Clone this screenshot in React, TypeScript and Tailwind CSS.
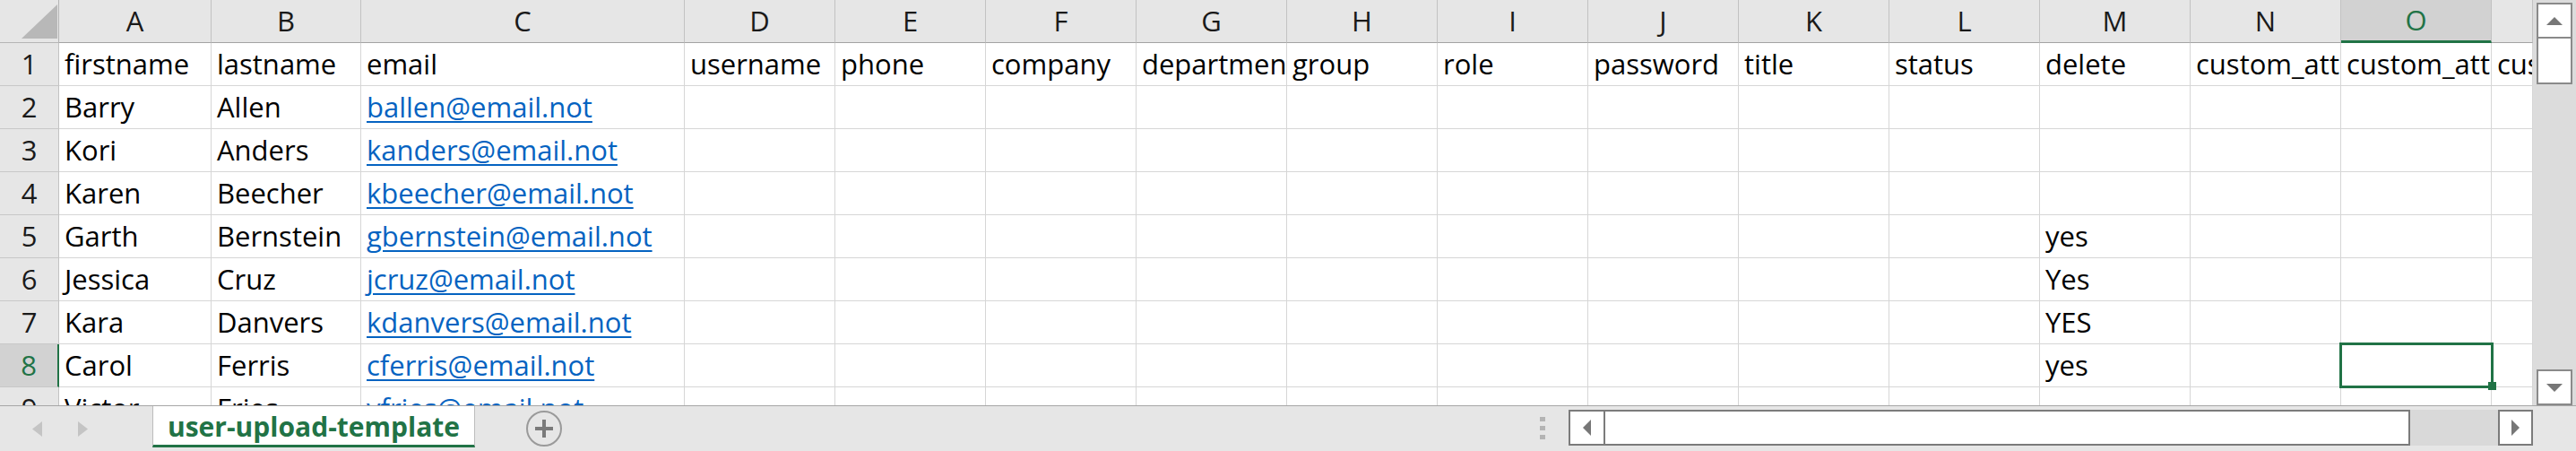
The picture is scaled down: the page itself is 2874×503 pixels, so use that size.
import { Fragment } from "react";

const cols = ["A", "B", "C", "D", "E", "F", "G", "H", "I", "J", "K", "L", "M", "N", "O", "P"];

function row(first: string, last: string, email: string, del = ""): string[] {
  return [first, last, email, "", "", "", "", "", "", "", "", "", del, "", "", ""];
}

const rows: string[][] = [
  [
    "firstname",
    "lastname",
    "email",
    "username",
    "phone",
    "company",
    "department",
    "group",
    "role",
    "password",
    "title",
    "status",
    "delete",
    "custom_attr1",
    "custom_attr2",
    "custom_attr3",
  ],
  row("Barry", "Allen", "ballen@email.not"),
  row("Kori", "Anders", "kanders@email.not"),
  row("Karen", "Beecher", "kbeecher@email.not"),
  row("Garth", "Bernstein", "gbernstein@email.not", "yes"),
  row("Jessica", "Cruz", "jcruz@email.not", "Yes"),
  row("Kara", "Danvers", "kdanvers@email.not", "YES"),
  row("Carol", "Ferris", "cferris@email.not", "yes"),
  row("Victor", "Fries", "vfries@email.not"),
];

function Triangle({ dir, color, w, h }: { dir: "up" | "down" | "left" | "right"; color: string; w: number; h: number }) {
  const pts =
    dir === "up"
      ? `0,${h} ${w / 2},0 ${w},${h}`
      : dir === "down"
        ? `0,0 ${w},0 ${w / 2},${h}`
        : dir === "left"
          ? `${w},0 ${w},${h} 0,${h / 2}`
          : `0,0 0,${h} ${w},${h / 2}`;
  return (
    <svg width={w} height={h} viewBox={`0 0 ${w} ${h}`} className="block">
      <polygon points={pts} fill={color} />
    </svg>
  );
}

function Sheet() {
  return (
    <div className="grid h-[452px] w-[2826px] shrink-0 auto-rows-[48px] grid-cols-[66px_170px_167px_361px_repeat(12,168px)_46px] overflow-hidden">
      <div className="relative border-r border-b border-[#b5b5b5] bg-[#e6e6e6]">
        <svg width="66" height="48" className="absolute left-0 top-0">
          <polygon points="64,5 64,43 24,43" fill="#b8b8b8" />
        </svg>
      </div>
      {cols.map((c) =>
        c === "O" ? (
          <div
            key={c}
            className="border-r border-b-[3px] border-r-[#c2c2c2] border-b-[#217346] bg-[#d2d2d2] text-center leading-[45px] text-[#217346]"
          >
            {c}
          </div>
        ) : (
          <div
            key={c}
            className="border-r border-b border-r-[#c2c2c2] border-b-[#a3a3a3] bg-[#e6e6e6] text-center leading-[47px] text-[#1a1a1a]"
          >
            {/* P is only partly in view, its letter sits past the edge */}
            {c === "P" ? "" : c}
          </div>
        ),
      )}
      {rows.map((r, i) => (
        <Fragment key={i}>
          {i === 7 ? (
            <div className="border-r-2 border-b border-r-[#217346] border-b-[#c8c8c8] bg-[#d2d2d2] text-center leading-[47px] text-[#217346]">
              {i + 1}
            </div>
          ) : (
            <div className="border-r border-b border-r-[#c2c2c2] border-b-[#c8c8c8] bg-[#e6e6e6] text-center leading-[47px] text-[#1a1a1a]">
              {i + 1}
            </div>
          )}
          {r.map((v, j) => (
            <div
              key={j}
              className="relative overflow-visible whitespace-nowrap border-r border-b border-[#d6d6d6] bg-white leading-[47px]"
            >
              <div className="overflow-hidden pl-[6px]">
                {j === 2 && i > 0 ? (
                  <span className="text-[#0563c1] underline decoration-2 underline-offset-[4px]">{v}</span>
                ) : (
                  <span className="text-black">{v}</span>
                )}
              </div>
              {i === 7 && j === 14 ? (
                <div className="absolute -left-[2px] -top-[2px] z-10 h-[51px] w-[172px] border-[3px] border-[#217346]">
                  <div className="absolute -right-[6px] -bottom-[5px] h-[9px] w-[9px] bg-[#217346]" />
                </div>
              ) : null}
            </div>
          ))}
        </Fragment>
      ))}
    </div>
  );
}

function VerticalScroll() {
  return (
    <div className="flex h-[452px] w-[48px] flex-col bg-[#dcdcdc] pl-[4px] pr-[4px]">
      <div className="mt-[3px] flex h-[40px] items-center justify-center border-2 border-[#8a8a8a] bg-white">
        <Triangle dir="up" color="#777777" w={18} h={9} />
      </div>
      <div className="h-[51px] border-2 border-t-0 border-[#8a8a8a] bg-white" />
      <div className="mt-auto flex h-[40px] items-center justify-center border-2 border-[#8a8a8a] bg-white">
        <Triangle dir="down" color="#777777" w={18} h={9} />
      </div>
    </div>
  );
}

function BottomBar() {
  return (
    <div className="flex h-[51px] border-t border-[#a6a6a6] bg-[#e6e6e6]">
      <div className="flex w-[170px] items-center pl-[36px]">
        <Triangle dir="left" color="#c4c4c4" w={11} h={17} />
        <div className="ml-[40px]">
          <Triangle dir="right" color="#c4c4c4" w={11} h={17} />
        </div>
      </div>
      <div className="h-[46px] w-[360px] border-x border-b-[3px] border-x-[#bdbdbd] border-b-[#217346] bg-white pt-[2px] text-center text-[30px] font-bold leading-[41px] text-[#217346]">
        user-upload-template
      </div>
      <div className="w-[97px] pl-[57px] pt-[5px]">
        <svg width="40" height="40" viewBox="0 0 40 40" className="block">
          <circle cx="20" cy="20" r="19" fill="none" stroke="#9a9a9a" strokeWidth="2" />
          <path d="M20 10 V30 M10 20 H30" stroke="#7a7a7a" strokeWidth="4" />
        </svg>
      </div>
      <div className="flex flex-1 justify-end pr-[26px] pt-[12px]">
        <div className="flex flex-col gap-[5px]">
          <div className="h-[5px] w-[6px] bg-[#b4b4b4]" />
          <div className="h-[5px] w-[6px] bg-[#b4b4b4]" />
          <div className="h-[5px] w-[6px] bg-[#b4b4b4]" />
        </div>
      </div>
      <div className="mt-[4px] flex h-[40px] w-[1076px]">
        <div className="flex w-[41px] items-center justify-center border-2 border-[#7b7b7b] bg-white">
          <Triangle dir="left" color="#777777" w={9} h={18} />
        </div>
        <div className="w-[898px] border-2 border-l-0 border-[#7b7b7b] bg-white" />
        <div className="flex-1 bg-[#d9d9d9]" />
        <div className="flex w-[39px] items-center justify-center border-2 border-[#7b7b7b] bg-white">
          <Triangle dir="right" color="#777777" w={9} h={18} />
        </div>
      </div>
      <div className="w-[48px]" />
    </div>
  );
}

export default function App() {
  return (
    <div className="h-[503px] w-[2874px] overflow-hidden bg-white font-['Open_Sans',sans-serif] text-[31px]">
      <div className="flex">
        <Sheet />
        <VerticalScroll />
      </div>
      <BottomBar />
    </div>
  );
}
